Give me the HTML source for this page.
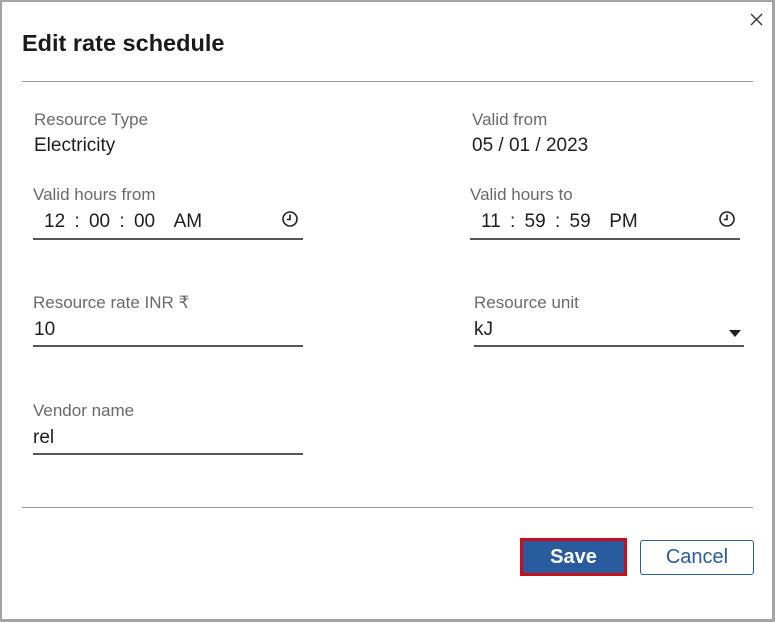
<!DOCTYPE html>
<html><head><style>
*{margin:0;padding:0;box-sizing:border-box}
body{width:775px;height:622px;background:#fff;font-family:"Liberation Sans",sans-serif;position:relative;overflow:hidden}
.frame{position:absolute;left:0;top:0;width:775px;height:622px;border:2px solid #a3a3a3;border-bottom-width:3px;border-right-width:3px}
.a{position:absolute;white-space:nowrap}
.lbl{font-size:17px;color:#6a6a6a}
.val{font-size:19px;color:#1e1e1e}
.ul{position:absolute;height:2px;background:#555}
.hr{position:absolute;left:22px;width:731px;height:1px;background:#9a9a9a}
</style></head><body>
<div class="frame"></div>
<div class="a" style="left:22px;top:30px;font-size:23.5px;font-weight:bold;color:#1a1a1a">Edit rate schedule</div>
<svg class="a" style="left:750px;top:13px" width="13" height="13" viewBox="0 0 13 13"><path d="M1 1L12 12M12 1L1 12" stroke="#333" stroke-width="1.3"/></svg>
<div class="hr" style="top:81px"></div>

<div class="a lbl" style="left:34px;top:110px">Resource Type</div>
<div class="a val" style="left:34px;top:135px">Electricity</div>
<div class="a lbl" style="left:472px;top:110px">Valid from</div>
<div class="a val" style="left:472px;top:135px">05 / 01 / 2023</div>

<div class="a lbl" style="left:33px;top:185px">Valid hours from</div>
<div class="a val" style="left:44px;top:211px;word-spacing:4px">12 : 00 : 00 &nbsp;AM</div>
<svg class="a" style="left:281px;top:210px" width="18" height="18" viewBox="0 0 18 18"><circle cx="9" cy="9" r="7" fill="none" stroke="#222" stroke-width="1.6"/><path d="M9 4.5V9.5H6" fill="none" stroke="#222" stroke-width="1.6"/></svg>
<div class="ul" style="left:33px;top:238px;width:270px"></div>

<div class="a lbl" style="left:470px;top:185px">Valid hours to</div>
<div class="a val" style="left:481px;top:211px;word-spacing:4px">11 : 59 : 59 &nbsp;PM</div>
<svg class="a" style="left:718px;top:210px" width="18" height="18" viewBox="0 0 18 18"><circle cx="9" cy="9" r="7" fill="none" stroke="#222" stroke-width="1.6"/><path d="M9 4.5V9.5H6" fill="none" stroke="#222" stroke-width="1.6"/></svg>
<div class="ul" style="left:470px;top:238px;width:270px"></div>

<div class="a lbl" style="left:33px;top:293px">Resource rate INR ₹</div>
<div class="a val" style="left:34px;top:319px">10</div>
<div class="ul" style="left:33px;top:345px;width:270px"></div>

<div class="a lbl" style="left:474px;top:293px">Resource unit</div>
<div class="a val" style="left:474px;top:319px">kJ</div>
<svg class="a" style="left:729px;top:330px" width="12" height="7" viewBox="0 0 12 7"><path d="M0 0H12L6 7Z" fill="#222"/></svg>
<div class="ul" style="left:474px;top:345px;width:270px"></div>

<div class="a lbl" style="left:33px;top:401px">Vendor name</div>
<div class="a val" style="left:33px;top:427px">rel</div>
<div class="ul" style="left:33px;top:453px;width:270px"></div>

<div class="hr" style="top:507px"></div>

<div class="a" style="left:520px;top:538px;width:107px;height:38px;background:#285c9e;border:3px solid #c8101a;color:#fff;font-size:20px;font-weight:bold;text-align:center;line-height:32px">Save</div>
<div class="a" style="left:640px;top:540px;width:114px;height:35px;border:1px solid #285c9e;border-radius:3px;color:#285c9e;font-size:20px;text-align:center;line-height:33px">Cancel</div>
</body></html>
